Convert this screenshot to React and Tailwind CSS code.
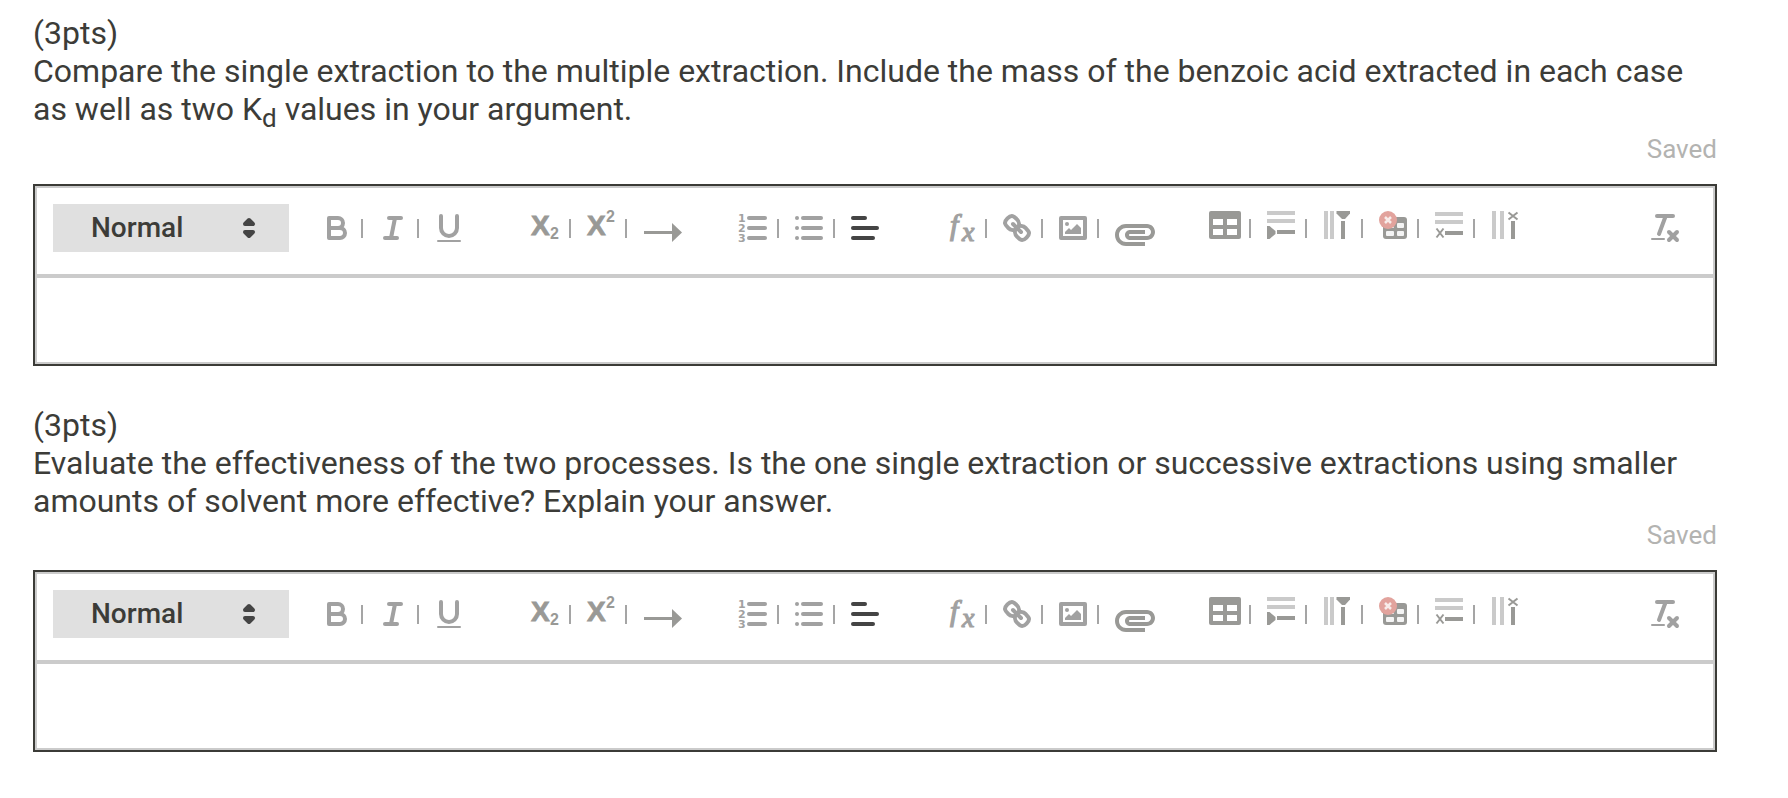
import React, { useState } from "react";

const Icon = ({ children }) => (
  <svg
    viewBox="0 0 18 18"
    className="block h-9 w-9 overflow-visible"
    fill="none"
    stroke="currentColor"
    strokeWidth="2"
    strokeLinecap="round"
    strokeLinejoin="round"
    aria-hidden="true"
  >
    {children}
  </svg>
);

// flat icons, drawn on a 36px grid
const FlatIcon = ({ children }) => (
  <svg
    viewBox="0 0 36 36"
    className="block h-9 w-9 overflow-visible text-[#999996]"
    fill="currentColor"
    aria-hidden="true"
  >
    {children}
  </svg>
);

const BoldIcon = () => (
  <Icon>
    <path d="M5,4H9.5A2.5,2.5,0,0,1,12,6.5v0A2.5,2.5,0,0,1,9.5,9H5A0,0,0,0,1,5,9V4A0,0,0,0,1,5,4Z" />
    <path d="M5,9h5.5A2.5,2.5,0,0,1,13,11.5v0A2.5,2.5,0,0,1,10.5,14H5a0,0,0,0,1,0,0V9A0,0,0,0,1,5,9Z" />
  </Icon>
);

const ItalicIcon = () => (
  <Icon>
    <line x1="7" x2="13" y1="4" y2="4" />
    <line x1="5" x2="11" y1="14" y2="14" />
    <line x1="8" x2="10" y1="14" y2="4" />
  </Icon>
);

const UnderlineIcon = () => (
  <Icon>
    <path d="M5,3V9a4.012,4.012,0,0,0,4,4H9a4.012,4.012,0,0,0,4-4V3" />
    <rect x="3" y="15" width="12" height="1" rx="0.5" fill="currentColor" stroke="none" />
  </Icon>
);

const SubscriptIcon = () => (
  <FlatIcon>
    <text
      x="4"
      y="25"
      stroke="currentColor"
      strokeWidth="0.8"
      className="font-['Liberation_Sans',sans-serif] text-[28px] font-bold"
    >
      X
    </text>
    <text x="23" y="29" className="font-['Liberation_Sans',sans-serif] text-[16px] font-bold">2</text>
  </FlatIcon>
);

const SuperscriptIcon = () => (
  <FlatIcon>
    <text
      x="4"
      y="25"
      stroke="currentColor"
      strokeWidth="0.8"
      className="font-['Liberation_Sans',sans-serif] text-[28px] font-bold"
    >
      X
    </text>
    <text x="23" y="12" className="font-['Liberation_Sans',sans-serif] text-[16px] font-bold">2</text>
  </FlatIcon>
);

const ArrowIcon = () => (
  <FlatIcon>
    <rect x="5" y="21" width="29" height="3" />
    <path d="M33 13 43 22.5 33 32Z" />
  </FlatIcon>
);

const OrderedIcon = () => (
  <Icon>
    <line x1="7" x2="15" y1="4" y2="4" />
    <line x1="7" x2="15" y1="9" y2="9" />
    <line x1="7" x2="15" y1="14" y2="14" />
    <g
      transform="scale(0.5)"
      fill="currentColor"
      stroke="none"
      className="font-['DejaVu_Sans',sans-serif] text-[11px] font-bold"
    >
      <text x="3" y="12">1</text>
      <text x="3" y="22">2</text>
      <text x="3" y="32">3</text>
    </g>
  </Icon>
);

const BulletIcon = () => (
  <Icon>
    <line x1="6" x2="15" y1="4" y2="4" />
    <line x1="6" x2="15" y1="9" y2="9" />
    <line x1="6" x2="15" y1="14" y2="14" />
    <line x1="3" x2="3" y1="4" y2="4" />
    <line x1="3" x2="3" y1="9" y2="9" />
    <line x1="3" x2="3" y1="14" y2="14" />
  </Icon>
);

const AlignIcon = () => (
  <Icon>
    <g className="text-[#444444]" stroke="currentColor">
      <line x1="3" x2="15" y1="9" y2="9" />
      <line x1="3" x2="13" y1="14" y2="14" />
      <line x1="3" x2="9" y1="4" y2="4" />
    </g>
  </Icon>
);

const FormulaIcon = () => (
  <svg
    viewBox="0 0 36 36"
    className="block h-9 w-9 overflow-visible font-['Liberation_Serif',serif] italic"
    fill="currentColor"
    stroke="currentColor"
    strokeWidth="1.2"
    aria-hidden="true"
  >
    <text x="7" y="25" className="text-[30px]">f</text>
    <text x="19" y="31" className="text-[28px]">x</text>
  </svg>
);

const LinkIcon = () => (
  <Icon>
    <line x1="7" x2="11" y1="7" y2="11" />
    <path d="M8.9,4.577a3.476,3.476,0,0,1,.36,4.679A3.476,3.476,0,0,1,4.577,8.9C3.185,7.5,2.035,6.4,4.217,4.217S7.5,3.185,8.9,4.577Z" />
    <path d="M13.423,9.1a3.476,3.476,0,0,0-4.679-.36,3.476,3.476,0,0,0,.36,4.679c1.392,1.392,2.5,2.542,4.679.36S14.815,10.5,13.423,9.1Z" />
  </Icon>
);

const ImageIcon = () => (
  <Icon>
    <rect x="3" y="4" width="12" height="10" />
    <circle cx="6" cy="7" r="1" fill="currentColor" stroke="none" />
    <polygon points="5 12 5 11 7 9 8 10 11 7 13 9 13 12" fill="currentColor" stroke="none" />
  </Icon>
);

const AttachIcon = () => (
  <FlatIcon>
    <path
      transform="scale(2)"
      d="M2 12.5C2 9.46 4.46 7 7.5 7H18c2.21 0 4 1.79 4 4s-1.79 4-4 4H9.5C8.12 15 7 13.88 7 12.5S8.12 10 9.5 10H17v2H9.41c-.55 0-.55 1 0 1H18c1.1 0 2-.9 2-2s-.9-2-2-2H7.5C5.57 9 4 10.57 4 12.5S5.57 16 7.5 16H17v2H7.5C4.46 18 2 15.54 2 12.5z"
    />
  </FlatIcon>
);

const TableIcon = () => (
  <FlatIcon>
    <rect x="2" y="1" width="32" height="28" rx="2" />
    <g fill="#fff">
      <rect x="6" y="9" width="10" height="6" />
      <rect x="20" y="9" width="10" height="6" />
      <rect x="6" y="19" width="10" height="6" />
      <rect x="20" y="19" width="10" height="6" />
    </g>
  </FlatIcon>
);

const InsertRowIcon = () => (
  <FlatIcon>
    <rect x="4" y="1" width="28" height="4" fill="#cacaca" />
    <rect x="4" y="9" width="28" height="4" fill="#cacaca" />
    <path d="M4 16H6.5L12.5 21V24L6.5 29H4Z" />
    <rect x="14" y="20" width="18" height="4" />
  </FlatIcon>
);

const InsertColumnIcon = () => (
  <FlatIcon>
    <rect x="5" y="1" width="4" height="28" fill="#cacaca" />
    <rect x="11" y="1" width="4" height="28" fill="#cacaca" />
    <path d="M17.5 1H31V3.5L26 9H23L17.5 3.5Z" />
    <rect x="22" y="11" width="4" height="18" />
  </FlatIcon>
);

const DeleteTableIcon = () => (
  <FlatIcon>
    <rect x="8" y="7" width="24" height="22" rx="3" />
    <g fill="#f4f4f4">
      <rect x="11" y="13" width="8" height="5" rx="1" />
      <rect x="22" y="13" width="7" height="5" rx="1" />
      <rect x="11" y="21" width="8" height="5" rx="1" />
      <rect x="22" y="21" width="7" height="5" rx="1" />
    </g>
    <circle cx="13" cy="10" r="9" fill="#e2a39d" />
    <path d="M10 7l6 6M16 7l-6 6" stroke="#f8ecea" strokeWidth="2.5" />
  </FlatIcon>
);

const DeleteRowIcon = () => (
  <FlatIcon>
    <rect x="4" y="2" width="28" height="4" fill="#cacaca" />
    <rect x="4" y="10" width="28" height="4" fill="#cacaca" />
    <path d="M5.5 18.5l7 9M12.5 18.5l-7 9" stroke="currentColor" strokeWidth="2" />
    <rect x="14" y="21" width="18" height="4" />
  </FlatIcon>
);

const DeleteColumnIcon = () => (
  <FlatIcon>
    <rect x="5" y="1" width="4" height="28" fill="#cacaca" />
    <rect x="13" y="1" width="4" height="28" fill="#cacaca" />
    <path d="M21.5 2.5l9 7M30.5 2.5l-9 7" stroke="currentColor" strokeWidth="2" />
    <rect x="24" y="11" width="4" height="18" />
  </FlatIcon>
);

const CleanIcon = () => (
  <Icon>
    <line x1="5" x2="13" y1="3" y2="3" />
    <line x1="6" x2="9.35" y1="12" y2="3" />
    <line x1="11" x2="15" y1="11" y2="15" />
    <line x1="15" x2="11" y1="11" y2="15" />
    <rect x="2" y="14" width="7" height="1" rx="0.5" fill="currentColor" stroke="none" />
  </Icon>
);

const groups = [
  [
    ["Bold", BoldIcon],
    ["Italic", ItalicIcon],
    ["Underline", UnderlineIcon],
  ],
  [
    ["Subscript", SubscriptIcon],
    ["Superscript", SuperscriptIcon],
    ["Arrow", ArrowIcon],
  ],
  [
    ["Numbered list", OrderedIcon],
    ["Bulleted list", BulletIcon],
    ["Align", AlignIcon],
  ],
  [
    ["Formula", FormulaIcon],
    ["Link", LinkIcon],
    ["Image", ImageIcon],
    ["Attach file", AttachIcon],
  ],
  [
    ["Insert table", TableIcon],
    ["Insert row", InsertRowIcon],
    ["Insert column", InsertColumnIcon],
    ["Delete table", DeleteTableIcon],
    ["Delete row", DeleteRowIcon],
    ["Delete column", DeleteColumnIcon],
  ],
];

function Toolbar() {
  const [format, setFormat] = useState("normal");

  return (
    <div className="flex items-center border-b-4 border-[#cbcbcb] pt-4 pr-5 pb-[22px] pl-4 text-[#a1a1a1]">
      <div className="relative mr-5 shrink-0">
        <select
          aria-label="Text style"
          value={format}
          onChange={(e) => setFormat(e.target.value)}
          className="block h-12 w-[236px] appearance-none bg-[#e0e0e0] pr-16 pl-[38px] text-[28px] font-medium text-[#3c3c38] outline-none"
        >
          <option value="normal">Normal</option>
          <option value="h1">Heading 1</option>
          <option value="h2">Heading 2</option>
        </select>
        <span className="pointer-events-none absolute top-1.5 right-[22px] text-[#444444]">
          <Icon>
            <polygon points="7 11 9 13 11 11" fill="currentColor" />
            <polygon points="7 7 9 5 11 7" fill="currentColor" />
          </Icon>
        </span>
      </div>

      <div className="flex gap-10">
        {groups.map((group, g) => (
          <div key={g} className="flex">
            {group.map(([label, Glyph], i) => (
              <div key={label} className="flex w-14 items-center gap-1.5 pl-2.5">
                <button type="button" aria-label={label} className="shrink-0 cursor-pointer">
                  <Glyph />
                </button>
                {i < group.length - 1 && <span className="h-[19px] w-0.5 shrink-0 bg-[#a5a5a5]" />}
              </div>
            ))}
          </div>
        ))}
      </div>

      <button type="button" aria-label="Clear formatting" className="mr-2.5 ml-auto shrink-0 cursor-pointer">
        <CleanIcon />
      </button>
    </div>
  );
}

function Question({ points, label, children }) {
  const [answer, setAnswer] = useState("");

  return (
    <section>
      <p>({points}pts)</p>
      <p>{children}</p>
      <p className="mb-5 text-right text-[26px] leading-[30px] text-[#b3b3b1]">Saved</p>
      <div className="border-2 border-[#3b3b37]">
        <div className="border-2 border-[#cbcbcb]">
          <Toolbar />
          <textarea
            aria-label={label}
            value={answer}
            onChange={(e) => setAnswer(e.target.value)}
            className="block h-[84px] w-full resize-none px-4 py-3 outline-none"
          />
        </div>
      </div>
    </section>
  );
}

export default function App() {
  return (
    <main className="flex min-h-screen flex-col gap-10 bg-white pt-3.5 pr-[71px] pb-11 pl-[33px] font-['Roboto',sans-serif] text-[32px] leading-[38px] text-[#3c3c38]">
      <Question points={3} label="Extraction comparison">
        Compare the single extraction to the multiple extraction. Include the mass of the benzoic
        acid extracted in each case as well as two K
        <sub className="static align-sub text-[26px] leading-8">d</sub> values in your argument.
      </Question>
      <Question points={3} label="Effectiveness evaluation">
        Evaluate the effectiveness of the two processes. Is the one single extraction or successive
        extractions using smaller amounts of solvent more effective? Explain your answer.
      </Question>
    </main>
  );
}
